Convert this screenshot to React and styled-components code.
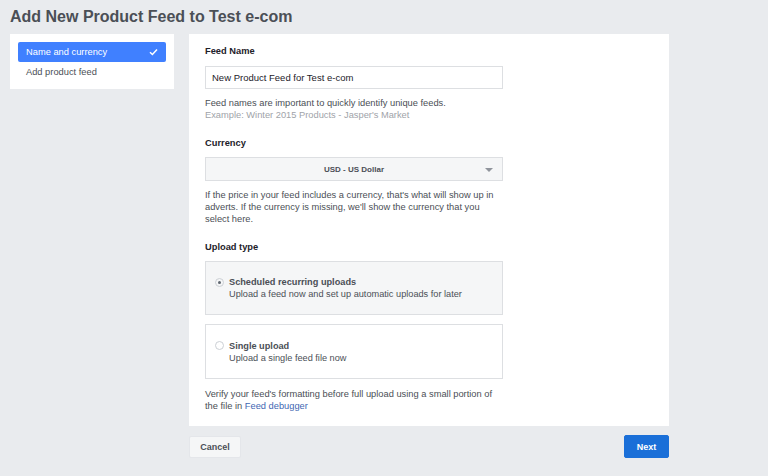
import React from "react";
import styled, { createGlobalStyle } from "styled-components";

const Global = createGlobalStyle`
  html, body { margin: 0; padding: 0; background: #e9ebee; }
  body { font-family: "Liberation Sans", Arial, sans-serif; color: #4b4f56; }
`;

const Page = styled.div`
  width: 768px;
  height: 476px;
  padding: 0 10px;
  box-sizing: border-box;
  background: #e9ebee;
`;

const Title = styled.h1`
  margin: 0;
  font-size: 16px;
  line-height: 33px;
  font-weight: bold;
  color: #4b4f56;
`;

const Layout = styled.div`
  display: flex;
  align-items: flex-start;
  gap: 15px;
`;

const Sidebar = styled.div`
  width: 164px;
  background: #fff;
  padding: 8px 8px 7px;
  box-sizing: border-box;
  display: flex;
  flex-direction: column;
  margin-top: 1px;
`;

const NavItem = styled.div`
  height: 20px;
  display: flex;
  align-items: center;
  justify-content: space-between;
  padding: 0 8px;
  font-size: 9.3px;
  border-radius: 2px;
  background: ${(p) => (p.$active ? "#4080ff" : "transparent")};
  color: ${(p) => (p.$active ? "#fff" : "#4b4f56")};
`;

const MainCol = styled.div`
  width: 480px;
  display: flex;
  flex-direction: column;
  margin-top: 1px;
`;

const Card = styled.div`
  background: #fff;
  padding: 10px 166px 14px 16px;
  display: flex;
  flex-direction: column;
`;

const Label = styled.div`
  font-size: 9.3px;
  line-height: 14px;
  font-weight: bold;
  color: #1d2129;
  margin-top: ${(p) => p.$mt || 0}px;
`;

const Input = styled.div`
  margin-top: 8px;
  height: 23px;
  box-sizing: border-box;
  border: 1px solid #dddfe2;
  display: flex;
  align-items: center;
  padding: 0 6px;
  font-size: 9.5px;
  color: #1d2129;
`;

const Select = styled.div`
  margin-top: 7px;
  height: 24px;
  box-sizing: border-box;
  border: 1px solid #dddfe2;
  background: #f5f6f7;
  display: flex;
  align-items: center;
  justify-content: center;
  position: relative;
  font-size: 8px;
  font-weight: bold;
  color: #4b4f56;
`;

const Caret = styled.span`
  position: absolute;
  right: 9px;
  top: 10px;
  width: 0;
  height: 0;
  border-left: 4px solid transparent;
  border-right: 4px solid transparent;
  border-top: 4px solid #90949c;
`;

const Help = styled.div`
  margin-top: ${(p) => p.$mt ?? 8}px;
  font-size: 9.3px;
  line-height: 12px;
  color: #4b4f56;
`;

const Muted = styled.span`
  color: #a0a3a9;
`;

const Link = styled.a`
  color: #4267b2;
  text-decoration: none;
`;

const Option = styled.div`
  margin-top: ${(p) => p.$mt}px;
  height: ${(p) => p.$h}px;
  box-sizing: border-box;
  border: 1px solid #dddfe2;
  background: ${(p) => (p.$selected ? "#f5f6f7" : "#fff")};
  display: flex;
  align-items: center;
  padding-left: 9px;
  gap: 5px;
`;

const Radio = styled.span`
  box-sizing: border-box;
  width: 9px;
  height: 9px;
  border-radius: 50%;
  border: 1px solid #ccd0d5;
  background: ${(p) => (p.$checked ? "#f5f6f7" : "#fff")};
  display: flex;
  align-items: center;
  justify-content: center;
  align-self: flex-start;
  margin-top: ${(p) => p.$top}px;
  flex: none;
  &::after {
    content: "";
    width: 3px;
    height: 3px;
    border-radius: 50%;
    background: ${(p) => (p.$checked ? "#606770" : "transparent")};
  }
`;

const OptText = styled.div`
  display: flex;
  flex-direction: column;
  font-size: 9.2px;
  line-height: 12px;
`;

const OptTitle = styled.div`
  font-weight: bold;
  color: #4b4f56;
`;

const Footer = styled.div`
  margin-top: 9px;
  display: flex;
  justify-content: space-between;
  align-items: flex-start;
`;

const Button = styled.button`
  font-family: "Liberation Sans", Arial, sans-serif;
  font-size: 9px;
  font-weight: bold;
  border-radius: 2px;
  height: ${(p) => (p.$primary ? 23 : 22)}px;
  margin-top: ${(p) => (p.$primary ? 0 : 1)}px;
  width: ${(p) => (p.$primary ? 45 : 52)}px;
  padding: 0;
  border: 1px solid ${(p) => (p.$primary ? "#1a6fd8" : "#e4e6ea")};
  background: ${(p) => (p.$primary ? "#1a6fd8" : "#f5f6f7")};
  color: ${(p) => (p.$primary ? "#fff" : "#4b4f56")};
`;

const Check = () => (
  <svg width="9" height="8" viewBox="0 0 9 8" fill="none">
    <path d="M1 4.2 L3.4 6.5 L8 1.5" stroke="#fff" strokeWidth="1.5" />
  </svg>
);

export default function App() {
  return (
    <Page>
      <Global />
      <Title>Add New Product Feed to Test e-com</Title>
      <Layout>
        <Sidebar>
          <NavItem $active>
            Name and currency
            <Check />
          </NavItem>
          <NavItem>Add product feed</NavItem>
        </Sidebar>
        <MainCol>
          <Card>
            <Label>Feed Name</Label>
            <Input>New Product Feed for Test e-com</Input>
            <Help>
              Feed names are important to quickly identify unique feeds.
              <br />
              <Muted>Example: Winter 2015 Products - Jasper's Market</Muted>
            </Help>
            <Label $mt={15}>Currency</Label>
            <Select>
              USD - US Dollar
              <Caret />
            </Select>
            <Help>
              If the price in your feed includes a currency, that's what will
              show up in adverts. If the currency is missing, we'll show the
              currency that you select here.
            </Help>
            <Label $mt={15}>Upload type</Label>
            <Option $selected $mt={7} $h={54}>
              <Radio $checked $top={16} />
              <OptText>
                <OptTitle>Scheduled recurring uploads</OptTitle>
                Upload a feed now and set up automatic uploads for later
              </OptText>
            </Option>
            <Option $mt={9} $h={55}>
              <Radio $top={16} />
              <OptText>
                <OptTitle>Single upload</OptTitle>
                Upload a single feed file now
              </OptText>
            </Option>
            <Help $mt={9}>
              Verify your feed's formatting before full upload using a small
              portion of the file in <Link href="#">Feed debugger</Link>
            </Help>
          </Card>
          <Footer>
            <Button>Cancel</Button>
            <Button $primary>Next</Button>
          </Footer>
        </MainCol>
      </Layout>
    </Page>
  );
}
